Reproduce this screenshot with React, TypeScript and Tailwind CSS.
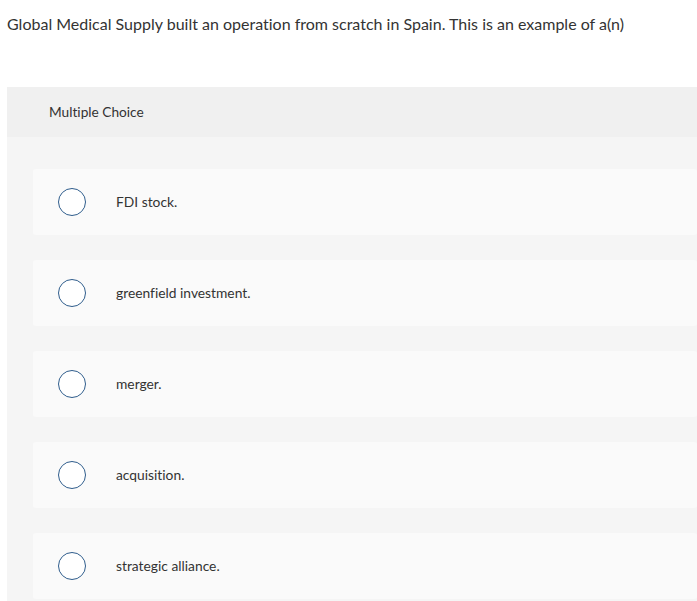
const options = ["FDI stock.", "greenfield investment.", "merger.", "acquisition.", "strategic alliance."];

export default function App() {
  return (
    <div className="min-h-screen bg-white text-[#333333] font-['Lato',sans-serif] [font-variant-ligatures:none] overflow-hidden">
      <p className="pl-[7px] pt-[13px] text-[16px] leading-[22px]">
        Global Medical Supply built an operation from scratch in Spain. This is an example of a(n)
      </p>

      <div className="ml-[7px] mt-[52px] bg-[#f5f5f5]">
        <div className="h-[50px] bg-[#f0f0f0] flex items-center pl-[42px] text-[13.7px]">Multiple Choice</div>
        <div className="flex flex-col gap-[25px] pt-[32px] pl-[26px] pb-4">
          {options.map((o) => (
            <div key={o} className="h-[66px] bg-[#fafafa] rounded-[3px] flex items-center">
              <span className="ml-[25px] w-[28px] h-[28px] rounded-full border-[1.5px] border-[#2f5d8c] bg-white shrink-0" />
              <span className="ml-[30px] text-[13.8px] pt-px">{o}</span>
            </div>
          ))}
        </div>
      </div>
    </div>
  );
}
